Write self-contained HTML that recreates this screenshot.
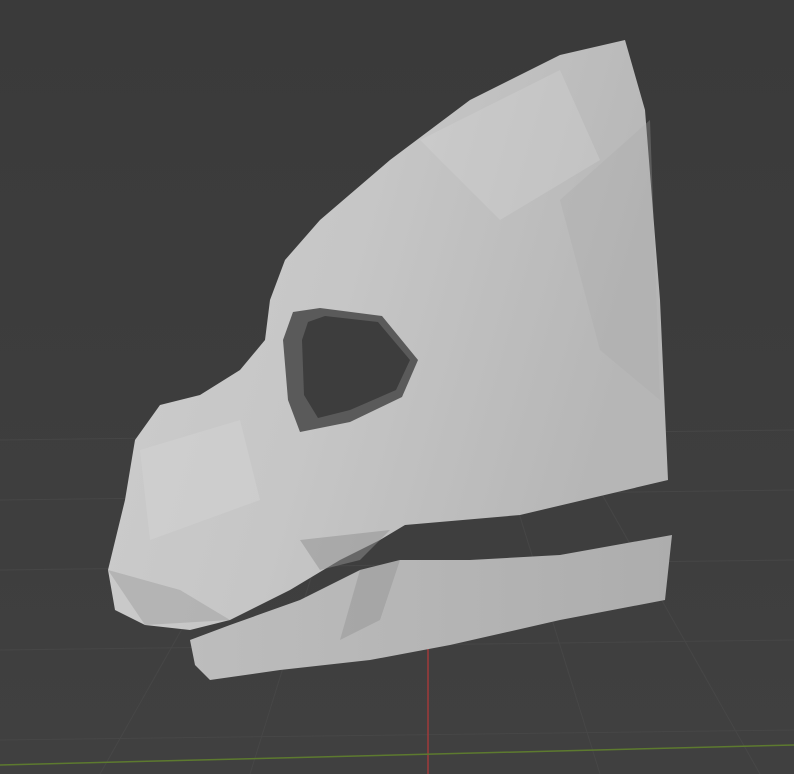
<!DOCTYPE html>
<html><head><meta charset="utf-8"><style>
html,body{margin:0;padding:0;background:#3d3d3d;width:794px;height:774px;overflow:hidden}
svg{display:block}
</style></head><body>
<svg width="794" height="774" viewBox="0 0 794 774" xmlns="http://www.w3.org/2000/svg">
<defs>
<linearGradient id="bg" x1="0" y1="0" x2="0" y2="1">
<stop offset="0" stop-color="#3a3a3a"/><stop offset="1" stop-color="#404040"/>
</linearGradient>
<linearGradient id="head" x1="0" y1="0" x2="1" y2="0.3">
<stop offset="0" stop-color="#cdcdcd"/><stop offset="0.5" stop-color="#c6c6c6"/><stop offset="1" stop-color="#b6b6b6"/>
</linearGradient>
<linearGradient id="jaw" x1="0" y1="0" x2="1" y2="0">
<stop offset="0" stop-color="#bdbdbd"/><stop offset="1" stop-color="#adadad"/>
</linearGradient>
</defs>
<rect width="794" height="774" fill="url(#bg)"/>
<g stroke="#4a4a4a" stroke-width="1" opacity="0.7">
<line x1="0" y1="440" x2="794" y2="430"/>
<line x1="0" y1="500" x2="794" y2="490"/>
<line x1="0" y1="570" x2="794" y2="560"/>
<line x1="0" y1="650" x2="794" y2="640"/>
<line x1="0" y1="740" x2="794" y2="730"/>
<line x1="100" y1="774" x2="300" y2="420"/>
<line x1="250" y1="774" x2="360" y2="420"/>
<line x1="600" y1="774" x2="490" y2="420"/>
<line x1="760" y1="774" x2="560" y2="420"/>
</g>
<line x1="428" y1="640" x2="428" y2="774" stroke="#a03a3a" stroke-width="1.5"/>
<line x1="0" y1="765" x2="794" y2="745" stroke="#5d7a2f" stroke-width="1.5"/>
<polygon fill="url(#jaw)" points="190,640 230,625 300,600 360,570 400,560 470,560 560,555 672,535 665,600 560,620 450,645 370,660 280,670 210,680 195,665"/>
<polygon fill="url(#head)" points="625,40 560,55 470,100 390,160 320,220 285,260 270,300 265,340 240,370 200,395 160,405 135,440 125,500 108,570 115,610 145,625 190,630 230,620 290,590 340,560 380,540 405,525 520,515 668,480 660,300 645,110"/>
<polygon fill="#d8d8d8" opacity="0.3" points="420,140 560,70 600,160 500,220"/>
<polygon fill="#a8a8a8" opacity="0.3" points="560,200 650,120 660,400 600,350"/>
<polygon fill="#dadada" opacity="0.3" points="140,450 240,420 260,500 150,540"/>
<polygon fill="#a0a0a0" opacity="0.5" points="108,570 180,590 230,620 145,625"/>
<polygon fill="#909090" opacity="0.5" points="300,540 390,530 360,560 320,570"/>
<polygon fill="#959595" opacity="0.5" points="360,570 400,560 380,620 340,640"/>
<polygon fill="#5a5a5a" points="293,312 320,308 382,316 418,360 402,397 350,422 300,432 288,400 283,340"/>
<polygon fill="#3d3d3d" points="308,322 325,316 378,322 410,360 396,390 350,410 318,418 304,395 302,340"/>
</svg>
</body></html>
